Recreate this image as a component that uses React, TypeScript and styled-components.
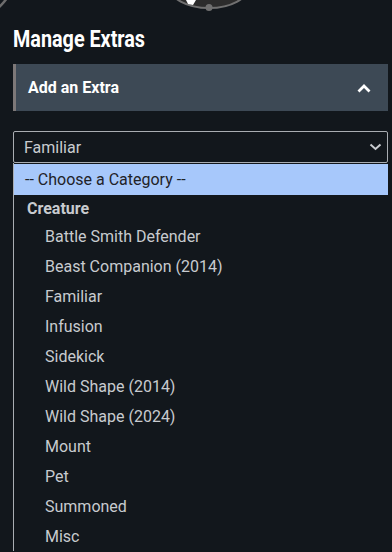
import styled, { createGlobalStyle } from "styled-components";

const GlobalStyle = createGlobalStyle`
  body {
    margin: 0;
    background: #12171c;
    font-family: Roboto, "Liberation Sans", sans-serif;
  }
`;

const groups = [
  {
    label: "Creature",
    options: [
      "Battle Smith Defender",
      "Beast Companion (2014)",
      "Familiar",
      "Infusion",
      "Sidekick",
      "Wild Shape (2014)",
      "Wild Shape (2024)",
      "Mount",
      "Pet",
      "Summoned",
      "Misc",
    ],
  },
];

const ChevronUp = () => (
  <svg width="14" height="10" viewBox="0 0 14 10">
    <path d="M1.5 8.5 L7 3 L12.5 8.5" fill="none" stroke="#fff" strokeWidth="2.8" />
  </svg>
);

const ChevronDown = () => (
  <svg width="13" height="8" viewBox="0 0 13 8">
    <path d="M1.5 1.5 L6.5 6 L11.5 1.5" fill="none" stroke="#c9ccd0" strokeWidth="2" />
  </svg>
);

const Decoration = () => (
  <Banner width="392" height="22" viewBox="0 0 392 22">
    <circle cx="-30" cy="-26" r="44" fill="none" stroke="#6c6c6c" strokeWidth="2.5" />
    <ellipse cx="209" cy="-14" rx="40" ry="22" fill="#2c2c2c" stroke="#707070" strokeWidth="2" />
    <path d="M186 0 L196 0 L193 5 L188 4 Z" fill="#fff" />
    <circle cx="209" cy="7.5" r="3.5" fill="#707070" />
  </Banner>
);

const App = () => {
  return (
    <Page>
      <GlobalStyle />
      <Decoration />
      <Content>
        <Title>
          <TitleText>Manage Extras</TitleText>
        </Title>
        <AccordionHeader>
          <AccordionLabel>Add an Extra</AccordionLabel>
          <ChevronUp />
        </AccordionHeader>
        <SelectBox>
          <span>Familiar</span>
          <ChevronDown />
        </SelectBox>
        <OptionList>
          <Option selected>-- Choose a Category --</Option>
          {groups.map((g) => (
            <div key={g.label}>
              <GroupLabel>{g.label}</GroupLabel>
              {g.options.map((o) => (
                <Option key={o} indent>
                  {o}
                </Option>
              ))}
            </div>
          ))}
        </OptionList>
      </Content>
    </Page>
  );
};

export default App;

const Page = styled.div`
  width: 392px;
  height: 552px;
  overflow: hidden;
  background: #12171c;
`;

const Banner = styled.svg`
  display: block;
`;

const Content = styled.div`
  padding: 0 4px 0 13px;
`;

const Title = styled.h1`
  margin: 3px 0 0;
  height: 29px;
  font-size: 23px;
  line-height: 29px;
  font-weight: 700;
  color: #fff;
  white-space: nowrap;
`;

const TitleText = styled.span`
  display: inline-block;
  transform: scaleX(0.86);
  transform-origin: left center;
`;

const AccordionHeader = styled.div`
  margin-top: 10px;
  height: 47px;
  display: flex;
  align-items: center;
  justify-content: space-between;
  padding: 0 17px 0 12px;
  background: #3d4955;
  border-left: 3px solid #7d7878;
`;

const AccordionLabel = styled.span`
  font-size: 16px;
  font-weight: 700;
  color: #fff;
`;

const SelectBox = styled.div`
  margin-top: 20px;
  height: 32px;
  box-sizing: border-box;
  display: flex;
  align-items: center;
  justify-content: space-between;
  padding: 0 5px 0 10px;
  border: 1px solid #a9adb2;
  border-radius: 2px;
  color: #c9ccd0;
  font-size: 16px;
`;

const OptionList = styled.div`
  border-left: 1px solid #a9adb2;
  padding-top: 1px;
`;

const Option = styled.div<{ selected?: boolean; indent?: boolean }>`
  height: ${({ selected }) => (selected ? "31px" : "30px")};
  display: flex;
  align-items: center;
  padding-left: ${({ indent }) => (indent ? "31px" : "11px")};
  font-size: 16px;
  color: ${({ selected }) => (selected ? "#1f2328" : "#c8cbcf")};
  background: ${({ selected }) => (selected ? "#a7c8fb" : "transparent")};
`;

const GroupLabel = styled.div`
  height: 26px;
  display: flex;
  align-items: center;
  padding-left: 13px;
  font-size: 16px;
  font-weight: 700;
  color: #c8cbcf;
`;
